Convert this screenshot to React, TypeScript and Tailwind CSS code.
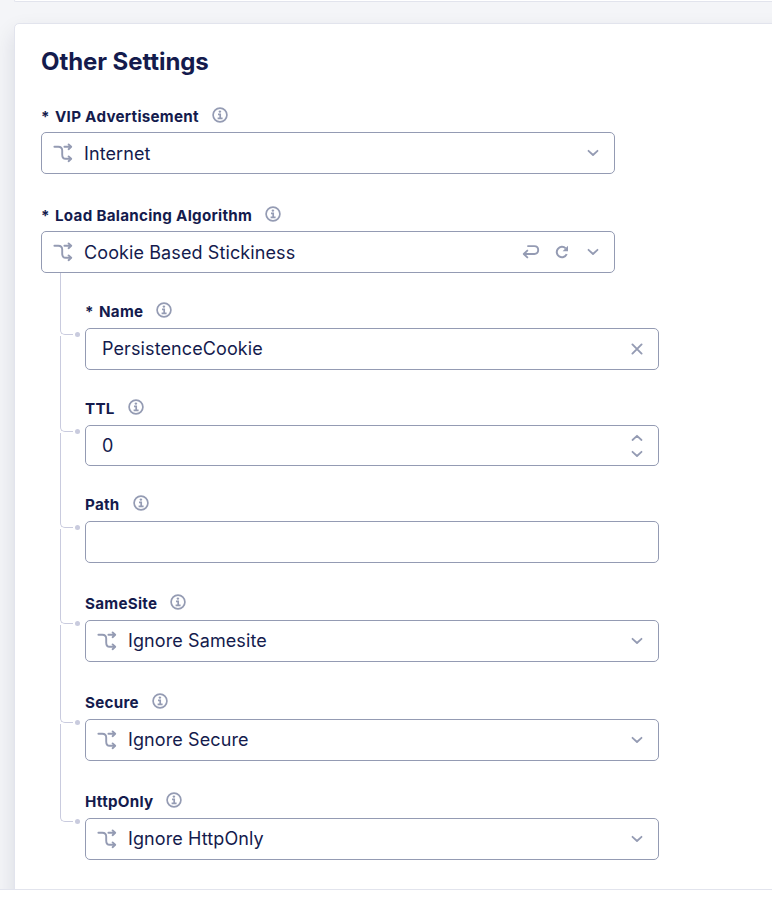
import React from "react";

const FONT = "font-['Inter',sans-serif] antialiased";

function InfoIcon() {
  return (
    <svg width="16" height="16" viewBox="0 0 16 16" fill="none" stroke="#949bb3" strokeWidth="1.7">
      <circle cx="8" cy="8" r="6.9" />
      <circle cx="7.9" cy="4.6" r="1.2" fill="#949bb3" stroke="none" />
      <path d="M6 7.4H8.2V11.2M5.6 11.3H10.6" />
    </svg>
  );
}

function BranchIcon() {
  return (
    <svg
      width="20"
      height="20"
      viewBox="0 0 20 20"
      fill="none"
      stroke="#949bb3"
      strokeWidth="1.9"
      strokeLinecap="round"
      strokeLinejoin="round"
    >
      <path d="M1.4 3.8H5.3C8.2 3.8 9.2 5.2 9.2 7.6V11.4C9.2 14.2 10.4 15.8 12.6 15.8H17.5" />
      <path d="M11.4 3.8H17.8M15.6 1.4L18.2 3.8L15.6 6.2M15.6 13.4L18.2 15.8L15.6 18.2" />
    </svg>
  );
}

function Chevron({ up = false }: { up?: boolean }) {
  return (
    <svg width="12" height="8" viewBox="0 0 12 8" fill="none" stroke="#949bb3" strokeWidth="1.8" strokeLinecap="round" strokeLinejoin="round">
      <path d={up ? "M1.5 6L6 1.8L10.5 6" : "M1.5 1.8L6 6L10.5 1.8"} />
    </svg>
  );
}

function ReturnIcon() {
  return (
    <svg width="18" height="16" viewBox="0 0 18 16" fill="none" stroke="#949bb3" strokeWidth="1.9" strokeLinecap="round" strokeLinejoin="round">
      <path d="M6 2.1H12.3C14.8 2.1 16.2 3.7 16.2 6C16.2 8.3 14.8 10 12.3 10H2M5.3 6.6L1.8 10L5.3 13.4" />
    </svg>
  );
}

function ReloadIcon() {
  return (
    <svg width="14" height="16" viewBox="0 0 14 16" fill="none" stroke="#949bb3" strokeWidth="2">
      <path d="M10.7 4.4A5.2 5.2 0 1 0 11.7 10.2" />
      <path d="M13 1.8V7.2H7.6Z" fill="#949bb3" stroke="none" />
    </svg>
  );
}

function CloseIcon() {
  return (
    <svg width="12" height="12" viewBox="0 0 12 12" fill="none" stroke="#949bb3" strokeWidth="1.9" strokeLinecap="round">
      <path d="M1.4 1.4L10.6 10.6M10.6 1.4L1.4 10.6" />
    </svg>
  );
}

type FieldProps = {
  label: string;
  value?: string;
  required?: boolean;
  select?: boolean;
  box?: string;
  gap?: string;
  valueClass?: string;
  actions?: React.ReactNode;
};

function Field({ label, value, required, select, box = "h-[42px]", gap = "pb-1", valueClass = "", actions }: FieldProps) {
  return (
    <div className="w-[574px]">
      <div className={`flex items-center ${gap}`}>
        <span className="flex h-6 items-center whitespace-pre pt-[2px] text-[15.2px] font-bold leading-6 tracking-[0.27px]">
          {required ? <span className="w-[14px] shrink-0">*</span> : null}
          {label}
        </span>
        <span className="-mt-[2px] ml-[13px]">
          <InfoIcon />
        </span>
      </div>
      <div className={`flex items-center rounded-[5px] border border-[#949bb3] bg-white pr-[15px] ${box} ${select ? "pl-[11px]" : "pl-4"}`}>
        {select ? (
          <span className="mr-[11px]">
            <BranchIcon />
          </span>
        ) : null}
        <span className={`flex-1 text-[18px] leading-6 tracking-[0.1px] ${valueClass}`}>{value}</span>
        {actions ?? (select ? <Chevron /> : null)}
      </div>
    </div>
  );
}

function Connector({ height }: { height: string }) {
  return (
    <div className={`flex items-end ${height}`}>
      <div className="h-full w-[13px] rounded-bl-[5px] border-b border-l border-[#c9cbde]" />
      <div className="-mb-[2px] ml-[2px] h-[5px] w-[5px] rounded-full bg-[#c9cbde]" />
    </div>
  );
}

export default function App() {
  return (
    <div className={`flex h-[901px] w-[772px] flex-col overflow-hidden bg-[#f4f5f8] text-[#141b4d] ${FONT}`}>
      <div className="flex h-[889px] shrink-0 flex-col overflow-hidden pl-[14px]">
        <div className="h-[2px] w-[800px] shrink-0 rounded-bl-[4px] border-b border-l border-[#e2e4ed] bg-white" />
        <section className="mt-[21px] h-[900px] w-[800px] shrink-0 rounded-tl-[5px] border border-[#e2e4ed] bg-white pl-[26px] pt-[22px] shadow-[0_10px_22px_rgba(20,26,60,0.12)]">
          <h2 className="h-8 text-[24px] font-bold leading-8 tracking-[-0.08px]">Other Settings</h2>
          <div className="mt-[26px] flex flex-col gap-[29px]">
            <Field label="VIP Advertisement" value="Internet" required select valueClass="pt-[2px]" />
            <Field
              label="Load Balancing Algorithm"
              value="Cookie Based Stickiness"
              required
              select
              valueClass="pt-[2px]"
              actions={
                <div className="flex items-center">
                  <ReturnIcon />
                  <span className="ml-[15px]">
                    <ReloadIcon />
                  </span>
                  <span className="ml-[18px]">
                    <Chevron />
                  </span>
                </div>
              }
            />
          </div>
          <div className="flex pl-[19px]">
            <div className="flex w-[25px] shrink-0 flex-col gap-px">
              <Connector height="h-[62px]" />
              <Connector height="h-[96px]" />
              <Connector height="h-[95px]" />
              <Connector height="h-[95px]" />
              <Connector height="h-[98px]" />
              <Connector height="h-[98px]" />
            </div>
            <div className="flex flex-col pt-[26px]">
              <Field
                label="Name"
                value="PersistenceCookie"
                required
                gap="pb-[5px]"
                actions={<CloseIcon />}
              />
              <div className="h-[26px]" />
              <Field
                label="TTL"
                value="0"
                box="h-[41px]"
                gap="pb-[5px]"
                actions={
                  <div className="flex flex-col gap-2">
                    <Chevron up />
                    <Chevron />
                  </div>
                }
              />
              <div className="h-[26px]" />
              <Field label="Path" gap="pb-[5px]" />
              <div className="h-7" />
              <Field label="SameSite" value="Ignore Samesite" select gap="pb-[5px]" />
              <div className="h-7" />
              <Field label="Secure" value="Ignore Secure" select gap="pb-[5px]" />
              <div className="h-7" />
              <Field label="HttpOnly" value="Ignore HttpOnly" select gap="pb-[5px]" />
            </div>
          </div>
        </section>
      </div>
      <footer className="h-3 shrink-0 border-t border-[#e2e4ed] bg-white" />
    </div>
  );
}
